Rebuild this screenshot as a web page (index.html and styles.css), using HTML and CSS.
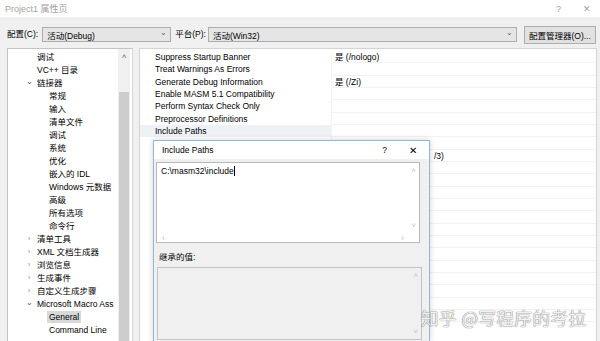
FILE: index.html
```html
<!DOCTYPE html>
<html lang="zh-CN">
<head>
    <meta charset="UTF-8">
    <meta name="viewport" content="width=device-width, initial-scale=1.0">
    <title>Project1 属性页</title>
    <link rel="stylesheet" href="styles.css">
</head>
<body>
    <div class="titlebar">
        <span class="title">Project1 属性页</span>
        <span class="help">?</span>
        <span class="close">✕</span>
    </div>

    <div class="toolbar">
        <label class="lbl">配置(C):</label>
        <div class="combo combo-config"><span>活动(Debug)</span><span class="chev">⌄</span></div>
        <label class="lbl lbl-platform">平台(P):</label>
        <div class="combo combo-platform"><span>活动(Win32)</span><span class="chev">⌄</span></div>
        <button class="btn">配置管理器(O)...</button>
    </div>

    <div class="main">
        <div class="tree">
            <ul class="tree-list">
                <li class="node">调试</li>
                <li class="node">VC++ 目录</li>
                <li class="node"><span class="arrow">⌄</span>链接器</li>
                <li class="leaf">常规</li>
                <li class="leaf">输入</li>
                <li class="leaf">清单文件</li>
                <li class="leaf">调试</li>
                <li class="leaf">系统</li>
                <li class="leaf">优化</li>
                <li class="leaf">嵌入的 IDL</li>
                <li class="leaf">Windows 元数据</li>
                <li class="leaf">高级</li>
                <li class="leaf">所有选项</li>
                <li class="leaf">命令行</li>
                <li class="node"><span class="arrow closed">›</span>清单工具</li>
                <li class="node"><span class="arrow closed">›</span>XML 文档生成器</li>
                <li class="node"><span class="arrow closed">›</span>浏览信息</li>
                <li class="node"><span class="arrow closed">›</span>生成事件</li>
                <li class="node"><span class="arrow closed">›</span>自定义生成步骤</li>
                <li class="node"><span class="arrow">⌄</span>Microsoft Macro Ass</li>
                <li class="leaf"><span class="selected">General</span></li>
                <li class="leaf">Command Line</li>
            </ul>
            <div class="vscroll">
                <span class="up">˄</span>
                <div class="thumb"></div>
            </div>
        </div>

        <div class="grid">
            <div class="row"><span class="name">Suppress Startup Banner</span><span class="value">是 (/nologo)</span></div>
            <div class="row"><span class="name">Treat Warnings As Errors</span><span class="value"></span></div>
            <div class="row"><span class="name">Generate Debug Information</span><span class="value">是 (/Zi)</span></div>
            <div class="row"><span class="name">Enable MASM 5.1 Compatibility</span><span class="value"></span></div>
            <div class="row"><span class="name">Perform Syntax Check Only</span><span class="value"></span></div>
            <div class="row"><span class="name">Preprocessor Definitions</span><span class="value"></span></div>
            <div class="row active"><span class="name">Include Paths</span><span class="value"></span></div>
            <div class="row"><span class="name"></span><span class="value"></span></div>
            <div class="row"><span class="name"></span><span class="value shifted">/3)</span></div>
            <div class="row"><span class="name"></span><span class="value"></span></div>
            <div class="row"><span class="name"></span><span class="value"></span></div>
            <div class="row"><span class="name"></span><span class="value"></span></div>
            <div class="row"><span class="name"></span><span class="value"></span></div>
            <div class="row"><span class="name"></span><span class="value"></span></div>
            <div class="row"><span class="name"></span><span class="value"></span></div>
            <div class="row"><span class="name"></span><span class="value"></span></div>
            <div class="row"><span class="name"></span><span class="value"></span></div>
            <div class="row"><span class="name"></span><span class="value"></span></div>
            <div class="row"><span class="name"></span><span class="value"></span></div>
            <div class="row"><span class="name"></span><span class="value"></span></div>
            <div class="row"><span class="name"></span><span class="value"></span></div>
            <div class="row"><span class="name"></span><span class="value"></span></div>
        </div>
    </div>

    <!-- Include Paths editor dialog, floating over the property grid -->
    <div class="dialog">
        <div class="dlg-title">
            <span>Include Paths</span>
            <span class="dlg-help">?</span>
            <span class="dlg-close">✕</span>
        </div>
        <div class="dlg-body">
            <div class="edit">
                <div class="edit-text">C:\masm32\include<span class="caret"></span></div>
                <div class="edit-vbar"><span>˄</span><span>˅</span></div>
                <div class="edit-hbar"><span>‹</span><span>›</span></div>
            </div>
            <div class="inherit-label">继承的值:</div>
            <div class="inherit">
                <div class="edit-vbar"><span>˄</span><span>˅</span></div>
            </div>
        </div>
    </div>

    <div class="watermark">知乎 @写程序的考拉</div>
</body>
</html>
```

FILE: styles.css
```css
body {
    margin: 0;
    width: 600px;
    height: 341px;
    overflow: hidden;
    position: relative;
    background-color: #f0f0f0;
    font-family: "Liberation Sans", "Noto Sans CJK SC", sans-serif;
    font-size: 8.5px;
    color: #000;
}

.titlebar {
    height: 17px;
    display: flex;
    align-items: center;
    padding: 0 9px 0 5px;
    background-color: #fff;
    color: #a3a3a3;
    font-size: 9px;
}
.titlebar .title {
    flex: 1;
}
.titlebar .help {
    margin-right: 22px;
}
.titlebar .close {
    font-size: 9px;
}

.toolbar {
    height: 31px;
    box-sizing: border-box;
    display: flex;
    align-items: flex-start;
    padding: 10px 3px 0 7px;
    white-space: nowrap;
}
.lbl {
    flex-shrink: 0;
    line-height: 15px;
    margin-right: 4px;
}
.lbl-platform {
    margin-left: 4px;
    margin-right: 2px;
}
.combo {
    flex-shrink: 0;
    height: 15px;
    box-sizing: border-box;
    display: flex;
    align-items: center;
    justify-content: space-between;
    padding: 0 3px 0 4px;
    background-color: #e5e5e5;
    border: 1px solid #adadad;
}
.combo-config {
    width: 129px;
}
.combo-platform {
    width: 309px;
}
.combo .chev {
    color: #606060;
    font-size: 8px;
    line-height: 8px;
    margin-top: -4px;
}
.btn {
    flex-shrink: 0;
    margin-left: 7px;
    margin-top: -1px;
    width: 72px;
    height: 18px;
    padding: 0;
    font-family: inherit;
    font-size: 8.5px;
    background-color: #e1e1e1;
    border: 1px solid #adadad;
}

.main {
    display: flex;
    gap: 6px;
    padding: 0 3px 0 7px;
    height: 293px;
}

.tree {
    width: 124px;
    display: flex;
    background-color: #fff;
    border: 1px solid #c4c4c4;
    border-right-color: #d8d8d8;
    border-bottom: none;
    overflow: hidden;
}
.tree-list {
    flex: 1;
    list-style: none;
    margin: 0;
    padding: 1.5px 0 0 0;
}
.tree-list li {
    height: 13px;
    line-height: 13px;
    white-space: nowrap;
}
.node {
    padding-left: 29px;
    position: relative;
}
.leaf {
    padding-left: 41px;
}
.arrow {
    position: absolute;
    left: 16px;
    width: 10px;
    text-align: center;
    color: #555;
    font-size: 8px;
    line-height: 8px;
    top: 1px;
}
.arrow.closed {
    top: 2px;
    color: #999;
}
.selected {
    background-color: #d9d9d9;
    padding: 1px 2px;
    margin-left: -2px;
}
.vscroll {
    width: 12px;
    margin-right: 2px;
    background-color: #f0f0f0;
    display: flex;
    flex-direction: column;
    align-items: center;
}
.vscroll .up {
    color: #606060;
    font-size: 8px;
    margin-top: 3px;
    height: 40px;
}
.thumb {
    width: 10px;
    flex: 1;
    background-color: #cdcdcd;
}

.grid {
    flex: 1;
    background-color: #fff;
    border: 1px solid #d4d4d4;
    border-bottom: none;
    padding-top: 2px;
    overflow: hidden;
}
.row {
    display: flex;
    height: 12.33px;
    line-height: 12.33px;
    white-space: nowrap;
}
.row .name {
    width: 176px;
    padding-left: 15px;
    overflow: hidden;
}
.row .value {
    flex: 1;
    padding-left: 3px;
    border-bottom: 1px solid #f2f2f2;
    border-left: 1px solid #f4f4f4;
    box-sizing: border-box;
}
.row.active .name {
    background-color: #eef1f6;
}
.shifted {
    text-indent: 99px;
}

.dialog {
    position: absolute;
    left: 153px;
    top: 140px;
    width: 275px;
    height: 201px;
    background-color: #f0f0f0;
    border: 1px solid #93b7d8;
    border-bottom: none;
    box-shadow: 0 0 6px rgba(0, 0, 0, 0.18);
}
.dlg-title {
    height: 18px;
    display: flex;
    align-items: center;
    padding: 0 12px 0 8px;
    background-color: #fff;
    font-size: 8.5px;
}
.dlg-title span:first-child {
    flex: 1;
}
.dlg-help {
    margin-right: 22px;
}
.dlg-close {
    font-size: 10px;
}
.dlg-body {
    padding: 3px 9px 0 2px;
}
.edit {
    position: relative;
    height: 81px;
    box-sizing: border-box;
    background-color: #fff;
    border: 1px solid #b9b9b9;
}
.edit-text {
    padding: 3px 0 0 4px;
    line-height: 11px;
}
.caret {
    display: inline-block;
    width: 1px;
    height: 10px;
    background-color: #000;
    vertical-align: -2px;
}
.edit-vbar {
    position: absolute;
    right: 0;
    top: 0;
    bottom: 9px;
    width: 11px;
    display: flex;
    flex-direction: column;
    justify-content: space-between;
    align-items: center;
    color: #c0c0c0;
    font-size: 8px;
    padding: 3px 0;
    box-sizing: border-box;
}
.edit-hbar {
    position: absolute;
    left: 0;
    right: 11px;
    bottom: 0;
    height: 9px;
    display: flex;
    justify-content: space-between;
    align-items: center;
    padding: 0 4px 0 5px;
    color: #c0c0c0;
    font-size: 9px;
}
.inherit-label {
    margin-top: 8px;
    padding-left: 3px;
    height: 13px;
    line-height: 13px;
}
.inherit {
    position: relative;
    margin-top: 3px;
    margin-left: 1px;
    margin-right: -2px;
    height: 71px;
    border: 1px solid #c3c3c3;
    background-color: #f0f0f0;
}
.inherit .edit-vbar {
    bottom: 0;
}

.watermark {
    position: absolute;
    left: 421px;
    top: 305px;
    font-family: "Noto Sans CJK SC", sans-serif;
    font-size: 17.5px;
    color: rgba(255, 255, 255, 0.92);
    text-shadow: 0 0 1px #7a7a7a, 0 0 1px #7a7a7a;
    letter-spacing: 0.5px;
}
```
